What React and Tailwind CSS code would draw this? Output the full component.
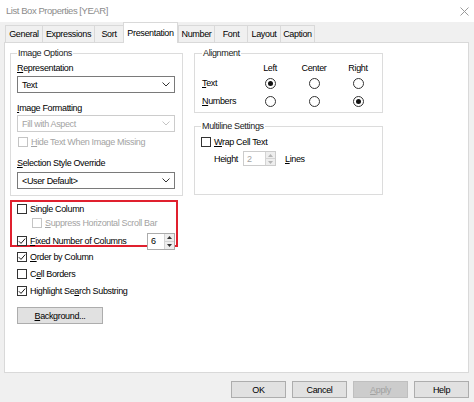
import React from 'react';

function U({ children }) {
  return <span className="underline underline-offset-1">{children}</span>;
}

function Check({ checked, disabled }) {
  return (
    <span
      className={
        disabled
          ? 'w-[10px] h-[10px] border border-[#c4c4c4] bg-white flex items-center justify-center shrink-0'
          : 'w-[10px] h-[10px] border border-[#333333] bg-white flex items-center justify-center shrink-0'
      }
    >
      {checked && (
        <svg width="8" height="8" viewBox="0 0 8 8">
          <path d="M0.8 4.2 L3 6.4 L7.2 1.6" fill="none" stroke="#1a1a1a" strokeWidth="1" />
        </svg>
      )}
    </span>
  );
}

function CheckRow({ checked, disabled, children, className = '' }) {
  return (
    <div className={`flex items-center h-[12px] gap-[3px] whitespace-nowrap ${className}`}>
      <Check checked={checked} disabled={disabled} />
      <span className={disabled ? 'text-[#a3a3a3]' : 'text-black'}>{children}</span>
    </div>
  );
}

function Chevron({ color = '#333' }) {
  return (
    <svg width="8" height="5" viewBox="0 0 8 5">
      <path d="M0.5 0.5 L4 4 L7.5 0.5" fill="none" stroke={color} strokeWidth="1" />
    </svg>
  );
}

function Select({ value, disabled }) {
  return (
    <div
      className={
        disabled
          ? 'h-[17px] border border-[#cccccc] bg-white flex items-center justify-between pl-[4px] pr-[4px] text-[#a3a3a3]'
          : 'h-[17px] border border-[#7a7a7a] bg-white flex items-center justify-between pl-[4px] pr-[4px] text-black'
      }
    >
      <span>{value}</span>
      <Chevron color={disabled ? '#c4c4c4' : '#333'} />
    </div>
  );
}

function Radio({ on }) {
  return (
    <span className="w-[11px] h-[11px] rounded-full border border-[#333333] bg-white flex items-center justify-center">
      {on && <span className="w-[5px] h-[5px] rounded-full bg-[#111111]" />}
    </span>
  );
}

function Arrows({ disabled }) {
  const c = disabled ? '#b5b5b5' : '#333';
  return (
    <div className="w-[10px] flex flex-col border-l border-[#d4d4d4]">
      <div className="flex-1 flex items-center justify-center bg-[#eeeeee]">
        <svg width="5" height="3" viewBox="0 0 5 3"><path d="M0 3 L2.5 0 L5 3 Z" fill={c} /></svg>
      </div>
      <div className="flex-1 flex items-center justify-center bg-[#eeeeee] border-t border-[#d4d4d4]">
        <svg width="5" height="3" viewBox="0 0 5 3"><path d="M0 0 L2.5 3 L5 0 Z" fill={c} /></svg>
      </div>
    </div>
  );
}

function Button({ children, disabled, className = '' }) {
  return (
    <div
      className={
        disabled
          ? `h-[17px] bg-[#cccccc] border border-[#bfbfbf] flex items-center justify-center text-[#a0a0a0] ${className}`
          : `h-[17px] bg-[#e1e1e1] border border-[#adadad] flex items-center justify-center text-black ${className}`
      }
    >
      {children}
    </div>
  );
}

const tabs = [
  ['General', 'w-[37px]'],
  ['Expressions', 'w-[52px]'],
  ['Sort', 'w-[29px]'],
  ['Presentation', 'w-[55px]'],
  ['Number', 'w-[36px]'],
  ['Font', 'w-[33px]'],
  ['Layout', 'w-[33px]'],
  ['Caption', 'w-[35px]'],
];

export default function App() {
  return (
    <div className="w-[474px] h-[402px] bg-[#f0f0f0] flex flex-col overflow-hidden text-[9px] tracking-[-0.35px] leading-[12px] text-black font-['Liberation_Sans',Arial,sans-serif]">
      {/* title bar */}
      <div className="h-[22px] bg-white flex items-center justify-between pl-[6px] pr-[5px] shrink-0">
        <span className="text-[9.5px] tracking-[-0.45px] text-[#8c8c8c]">List Box Properties [YEAR]</span>
        <svg width="9" height="9" viewBox="0 0 9 9">
          <path d="M0.5 0.5 L8.5 8.5 M8.5 0.5 L0.5 8.5" stroke="#9a9a9a" strokeWidth="1" />
        </svg>
      </div>

      {/* tabs */}
      <div className="h-[20px] flex items-end pl-[5px] shrink-0 relative z-10">
        {tabs.map(([name, w], i) =>
          name === 'Presentation' ? (
            <div
              key={name}
              className={`${w} h-[21px] -mb-[1px] bg-white border border-b-0 border-[#d9d9d9] flex items-start justify-center pt-[4px]`}
            >
              {name}
            </div>
          ) : (
            <div
              key={name}
              className={
                i === tabs.length - 1
                  ? `${w} h-[17px] bg-[#f0f0f0] border-t border-l border-r border-[#d9d9d9] flex items-center justify-center`
                  : `${w} h-[17px] bg-[#f0f0f0] border-t border-l border-[#d9d9d9] flex items-center justify-center`
              }
            >
              {name}
            </div>
          )
        )}
      </div>

      {/* panel */}
      <div className="h-[331px] ml-[4px] mr-[5px] bg-white border border-[#d9d9d9] flex gap-[11px] pl-[5px] pt-[4px] shrink-0">
        {/* left column */}
        <div className="w-[173px] flex flex-col">
          <fieldset className="border border-[#dcdcdc] pl-[6px] pr-[7px] pb-[6px] flex flex-col">
            <legend className="px-[1px] leading-[12px] text-[#222]">Image Options</legend>
            <div className="mt-[3px]"><U>R</U>epresentation</div>
            <div className="mt-[2px]"><Select value="Text" /></div>
            <div className="mt-[9px]"><U>I</U>mage Formatting</div>
            <div className="mt-[1px]"><Select value="Fill with Aspect" disabled /></div>
            <CheckRow disabled className="mt-[4px] ml-[1px]"><U>H</U>ide Text When Image Missing</CheckRow>
            <div className="mt-[9px]"><U>S</U>election Style Override</div>
            <div className="mt-[3px]"><Select value="<User Default>" /></div>
          </fieldset>

          <div className="mt-[4px] w-[168px] h-[47px] border-2 border-[#e0202e] pl-[5px] pr-[1px] pt-[1px] flex flex-col">
            <CheckRow>Single Column</CheckRow>
            <CheckRow disabled className="mt-[2px] ml-[15px]"><U>S</U>uppress Horizontal Scroll Bar</CheckRow>
            <div className="mt-[6px] flex items-center h-[12px] justify-between">
              <div className="flex items-center gap-[3px] whitespace-nowrap">
                <Check checked />
                <span><U>F</U>ixed Number of Columns</span>
              </div>
              <div className="w-[28px] h-[17px] -my-[3px] border border-[#ababab] bg-white flex">
                <span className="flex-1 pl-[3px] flex items-center">6</span>
                <Arrows />
              </div>
            </div>
          </div>

          <div className="pl-[7px] flex flex-col">
            <CheckRow checked className="mt-[4px]"><U>O</U>rder by Column</CheckRow>
            <CheckRow className="mt-[5px]">C<U>e</U>ll Borders</CheckRow>
            <CheckRow checked className="mt-[5px]">Highlight Se<U>a</U>rch Substring</CheckRow>
            <Button className="mt-[10px] w-[86px]"><span><U>B</U>ackground...</span></Button>
          </div>
        </div>

        {/* right column */}
        <div className="w-[189px] flex flex-col">
          <fieldset className="border border-[#dcdcdc] pl-[7px] pb-[5px]">
            <legend className="px-[1px] leading-[12px] text-[#222]">Alignment</legend>
            <div className="grid grid-cols-[46px_44px_44px_44px] mt-[3px]">
              <span />
              <span className="text-center">Left</span>
              <span className="text-center">Center</span>
              <span className="text-center">Right</span>
            </div>
            <div className="grid grid-cols-[46px_44px_44px_44px] mt-[3px] h-[12px] items-center">
              <span><U>T</U>ext</span>
              <span className="flex justify-center"><Radio on /></span>
              <span className="flex justify-center"><Radio /></span>
              <span className="flex justify-center"><Radio /></span>
            </div>
            <div className="grid grid-cols-[46px_44px_44px_44px] mt-[6px] h-[12px] items-center">
              <span><U>N</U>umbers</span>
              <span className="flex justify-center"><Radio /></span>
              <span className="flex justify-center"><Radio /></span>
              <span className="flex justify-center"><Radio on /></span>
            </div>
          </fieldset>

          <fieldset className="mt-[7px] border border-[#dcdcdc] pl-[6px] h-[75px]">
            <legend className="px-[1px] leading-[12px] text-[#222]">Multiline Settings</legend>
            <CheckRow className="mt-[4px]"><U>W</U>rap Cell Text</CheckRow>
            <div className="mt-[3px] flex items-center h-[15px] pl-[13px]">
              <span className="w-[29px]">Hei<U>g</U>ht</span>
              <div className="w-[33px] h-[15px] border border-[#cccccc] bg-white flex">
                <span className="flex-1 pl-[3px] flex items-center text-[#a3a3a3]">2</span>
                <Arrows disabled />
              </div>
              <span className="ml-[9px]"><U>L</U>ines</span>
            </div>
          </fieldset>
        </div>
      </div>

      {/* footer buttons */}
      <div className="flex justify-end gap-[6px] pr-[5px] pt-[8px]">
        <Button className="w-[55px]">OK</Button>
        <Button className="w-[55px]">Cancel</Button>
        <Button disabled className="w-[55px]"><span><U>A</U>pply</span></Button>
        <Button className="w-[55px]">Help</Button>
      </div>
    </div>
  );
}
